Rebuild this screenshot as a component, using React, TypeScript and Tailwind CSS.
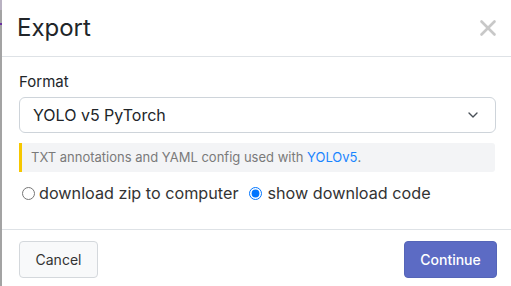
import React, { useState } from "react";
import { ChevronDown, X } from "lucide-react";

export default function App() {
  const [mode, setMode] = useState<"zip" | "code">("code");

  return (
    <div
      className="flex h-[286px] w-[511px] overflow-hidden bg-white text-[#212529]"
      style={{ fontFamily: "Inter, 'Noto Sans', sans-serif" }}
    >
      <div className="flex w-[2px] shrink-0 flex-col bg-[#a3a3a3]">
        <div className="h-[10px] bg-[#b9b2c2]" />
        <div className="mt-[13px] h-[2px] bg-[#6a2fa0]" />
      </div>
      <div className="flex flex-1 flex-col">
        <div className="flex h-[57px] items-center justify-between border-b border-[#dee2e6] pl-[15px] pr-[10px]">
          <h2 className="text-[24px] font-normal leading-none">Export</h2>
          <X size={26} strokeWidth={2.4} className="text-[#c8c8c8]" />
        </div>

        <div className="flex h-[173px] flex-col border-b border-[#dee2e6] pl-[17px] pr-[15px] pt-[15px]">
          <label className="text-[15px] leading-[20px]">Format</label>
          <div className="mt-[5px] flex h-[36px] items-center justify-between rounded-[6px] border border-[#ced4da] pl-[13px] pr-[14px]">
            <span className="text-[16px]">YOLO v5 PyTorch</span>
            <ChevronDown size={16} strokeWidth={2} className="text-[#495057]" />
          </div>
          <div className="mt-[10px] flex h-[29px] w-[476px] items-center rounded-r-[3px] border-l-[3px] border-[#f6c700] bg-[#f3f4f6] pl-[9px] text-[13px] text-[#7a7a7a]">
            TXT annotations and YAML config used with&nbsp;
            <span className="text-[#1a85ff]">YOLOv5</span>.
          </div>
          <div className="mt-[9px] flex items-center text-[16.2px] text-[#333]">
            <label className="flex items-center">
              <input
                type="radio"
                name="mode"
                checked={mode === "zip"}
                onChange={() => setMode("zip")}
                className="m-0 mr-[4px] ml-[3px] h-[13px] w-[13px]"
              />
              download zip to computer
            </label>
            <label className="ml-[11px] flex items-center">
              <input
                type="radio"
                name="mode"
                checked={mode === "code"}
                onChange={() => setMode("code")}
                className="m-0 mr-[5px] h-[13px] w-[13px]"
              />
              show download code
            </label>
          </div>
        </div>

        <div className="flex flex-1 items-start justify-between pl-[17px] pr-[14px] pt-[11px]">
          <button className="h-[37px] w-[79px] rounded-[4px] border border-[#d4d8dc] bg-[#f8f9fa] text-[14px] text-[#333]">
            Cancel
          </button>
          <button className="h-[37px] w-[93px] rounded-[4px] border border-[#5565b8] bg-[#5c6bc4] text-[14px] font-medium text-white">
            Continue
          </button>
        </div>
      </div>
    </div>
  );
}
